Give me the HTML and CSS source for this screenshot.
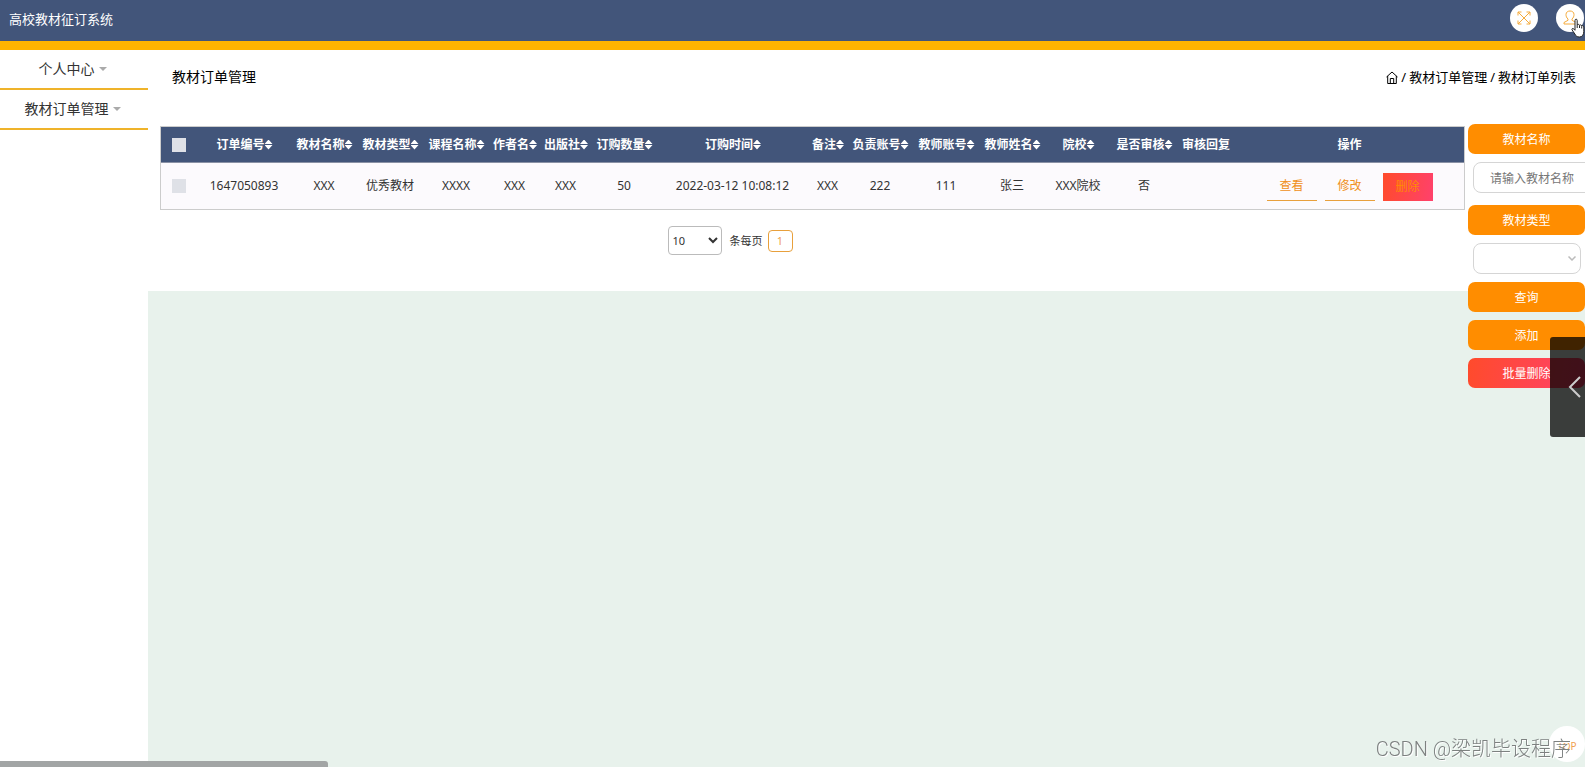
FILE: index.html
```html
<!DOCTYPE html>
<html lang="zh-CN">
<head>
<meta charset="utf-8">
<title>高校教材征订系统</title>
<link rel="stylesheet" href="styles.css">
</head>
<body>
<header class="topbar">
  <h1 class="brand">高校教材征订系统</h1>
  <div class="tools">
    <button class="round" aria-label="全屏"><svg width="14" height="14" viewBox="0 0 14 14"><path d="M1 4.500V1h3.500M9.500 1H13v3.500M13 9.500V13H9.500M4.500 13H1V9.500M1 1l12 12M13 1L1 13"/></svg></button>
    <button class="round" aria-label="用户"><svg width="14" height="16" viewBox="0 0 14 16"><path d="M5 9C3.500 7.800 3 6 3 4.500 3 2 5 1 7 1s4 1 4 3.500C11 6 10.500 7.800 9 9v1.300l4 2.200V14H1v-1.500l4-2.200z"/></svg></button>
  </div>
  <svg class="pointer" width="14" height="20" viewBox="0 0 14 20"><path d="M4 12V2.500C4 .7 6.200.7 6.200 2.500V7c.4-1 2.200-.8 2.300.4.500-.9 2.100-.6 2.200.6.600-.7 2.100-.3 2.100 1v4.500c0 3-1.500 5.500-4.500 5.500-2.300 0-3.500-1.200-4.300-2.800L1 11.800C.5 10.600 2 9.900 2.700 10.800L4 12.500M6.200 7v3M8.500 7.500V10M10.700 8.300V10.500"/></svg>
</header>
<div class="shell">
  <nav class="side">
    <a href="#">个人中心<span class="caret"></span></a>
    <a href="#">教材订单管理<span class="caret"></span></a>
  </nav>
  <main class="main">
    <div class="panel">
      <div class="heading">
        <h2>教材订单管理</h2>
        <nav class="crumbs">
          <a href="#" aria-label="首页"><svg width="12" height="13" viewBox="0 0 12 13"><path d="M.5 6L6 1l5.500 5M1.700 5v7.500h8.600V5M4.300 12V7.500h3.400V12"/></svg></a>
          <span>/</span><a href="#">教材订单管理</a><span>/</span><span>教材订单列表</span>
        </nav>
      </div>
      <div class="content">
        <section class="list">
          <table>
            <colgroup><col class="w36"><col class="w94"><col class="w66"><col class="w66"><col class="w66"><col class="w51"><col class="w51"><col class="w66"><col class="w151"><col class="w39"><col class="w66"><col class="w66"><col class="w66"><col class="w66"><col class="w66"><col class="w58"><col class="w229"></colgroup>
            <thead><tr>
              <th><input type="checkbox" aria-label="全选"></th>
              <th>订单编号<i></i></th><th>教材名称<i></i></th><th>教材类型<i></i></th><th>课程名称<i></i></th><th>作者名<i></i></th><th>出版社<i></i></th><th>订购数量<i></i></th><th>订购时间<i></i></th><th>备注<i></i></th><th>负责账号<i></i></th><th>教师账号<i></i></th><th>教师姓名<i></i></th><th>院校<i></i></th><th>是否审核<i></i></th><th>审核回复</th><th>操作</th>
            </tr></thead>
            <tbody><tr>
              <td><input type="checkbox" aria-label="选择订单"></td>
              <td>1647050893</td><td>XXX</td><td>优秀教材</td><td>XXXX</td><td>XXX</td><td>XXX</td><td>50</td><td>2022-03-12 10:08:12</td><td>XXX</td><td>222</td><td>111</td><td>张三</td><td>XXX院校</td><td>否</td><td></td>
              <td><div class="actions"><button>查看</button><button>修改</button><button class="danger">删除</button></div></td>
            </tr></tbody>
          </table>
          <div class="pager">
            <select id="size" class="size"><option>10</option></select>
            <label for="size">条每页</label>
            <button class="page">1</button>
          </div>
        </section>
        <form class="filters">
          <label class="pill" for="name">教材名称</label>
          <input class="field name" id="name" type="text" placeholder="请输入教材名称">
          <label class="pill" for="type">教材类型</label>
          <select class="field type" id="type"><option></option></select>
          <button class="pill" type="button">查询</button>
          <button class="pill" type="button">添加</button>
          <button class="pill remove" type="button">批量删除</button>
        </form>
      </div>
    </div>
  </main>
</div>
<button class="drawer" aria-label="展开"><svg width="14" height="22" viewBox="0 0 14 22"><path d="M12 1L2 11l10 10"/></svg></button>
<button class="to-top">TOP</button>
<div class="watermark">CSDN @梁凯毕设程序</div>
<div class="status"></div>
</body>
</html>
```
FILE: styles.css
```css
* { box-sizing: border-box; }
body {
  margin: 0;
  min-height: 100vh;
  display: flex;
  flex-direction: column;
  overflow: hidden;
  background: #e8f2ec;
  color: #333;
  font: 12px/18px "Noto Sans", "Noto Sans CJK SC", sans-serif;
}
h1, h2 { margin: 0; font-weight: 400; }
a { color: inherit; text-decoration: none; }
button, input, select { font: inherit; margin: 0; }
button { border: 0; padding: 0; }
svg { fill: none; stroke: currentColor; }

.topbar {
  position: relative;
  height: 50px;
  display: flex;
  justify-content: space-between;
  padding: 4px 1px 0 9px;
  background: #42557a;
  border-bottom: 9px solid #ffb400;
}
.brand { color: #fff; font-size: 13px; line-height: 30px; }
.tools { display: flex; gap: 18px; }
.round {
  width: 28px;
  height: 28px;
  display: grid;
  place-items: center;
  border-radius: 50%;
  background: #fff;
  color: #f5ab3c;
}
.pointer { position: absolute; right: 0; top: 18px; fill: #fff; stroke: #222; }

.shell { flex: 1; display: flex; }
.side { width: 148px; flex: none; background: #fff; }
.side a {
  display: flex;
  justify-content: center;
  align-items: center;
  gap: 4px;
  height: 40px;
  padding-right: 3px;
  font-size: 14px;
  border-bottom: 2px solid #efb32a;
}
.caret { border: 4px solid transparent; border-top-color: #aaa; border-bottom: 0; }
.main { flex: 1; min-width: 0; }
.panel { background: #fff; padding-bottom: 36px; }
.heading {
  display: flex;
  justify-content: space-between;
  align-items: center;
  height: 74px;
  padding: 0 9px 20px 24px;
  color: #000;
}
.heading h2 { font-size: 14px; }
.crumbs { display: flex; align-items: center; gap: 3px; font-size: 13px; }
.crumbs svg { display: block; }
.content { display: flex; align-items: flex-start; gap: 4px; height: 131px; padding-left: 12px; }
.list { flex: 1; min-width: 0; padding-top: 2px; }

table {
  width: 100%;
  table-layout: fixed;
  border-collapse: separate;
  border-spacing: 0;
  border: 1px solid #ccc;
}
.w36 { width: 36px; }
.w39 { width: 39px; }
.w51 { width: 51px; }
.w58 { width: 58px; }
.w66 { width: 66px; }
.w94 { width: 94px; }
.w151 { width: 151px; }
.w229 { width: 229px; }
th, td { padding: 0; text-align: center; vertical-align: middle; white-space: nowrap; }
th { height: 36px; background: #42557a; color: #fff; font-weight: 700; border-bottom: 1px solid #8a91a5; }
td { height: 46px; background: #fcfafd; }
th i {
  display: inline-block;
  width: 8px;
  height: 10px;
  margin-right: -1px;
  vertical-align: -1px;
  background: #fff;
  clip-path: polygon(50% 0, 100% 44%, 0 44%, 0 56%, 100% 56%, 50% 100%, 0 56%, 0 44%);
}
table input {
  display: block;
  margin: 0 auto;
  width: 14px;
  height: 14px;
  appearance: none;
  background: #dfe1e7;
}
.actions { display: flex; justify-content: center; gap: 8px; padding-top: 1px; }
.actions button { width: 50px; height: 28px; background: none; color: #f09020; border-bottom: 1px solid #e8a03c; }
.actions .danger { background: linear-gradient(100deg, #ff4b2b, #ff416c); color: #ff8c00; border: 0; }

.pager { display: flex; justify-content: center; align-items: center; margin: 16px 164px 0 0; font-size: 11px; }
.size { width: 54px; height: 29px; padding: 0; border: 1px solid #bbb; border-radius: 4px; background: #fff; color: #333; }
.pager label { margin: 0 5px 0 8px; }
.page { width: 25px; height: 22px; border: 1px solid #e8a03c; border-radius: 4px; background: #fff; color: #f0a050; }

.filters { width: 117px; flex: none; display: flex; flex-direction: column; }
.pill {
  display: block;
  flex: none;
  height: 30px;
  margin-bottom: 8px;
  padding-top: 1px;
  border-radius: 7px;
  background: #ff8d00;
  color: #fff;
  text-align: center;
  line-height: 30px;
}
.remove { background: linear-gradient(100deg, #ff4b2b, #ff416c); margin: 0; }
.field { height: 31px; margin: 0 4px 12px 5px; border: 1px solid #d5d5d5; border-radius: 8px; background: #fff; color: #666; }
.name { width: 120px; padding: 2px 16px 0; }
.name::placeholder { color: #777; }
.type {
  appearance: none;
  margin-bottom: 8px;
  background: #fff url("data:image/svg+xml,%3Csvg xmlns='http://www.w3.org/2000/svg' width='8' height='5' fill='none' stroke='%23bbb' stroke-width='1.500'%3E%3Cpath d='M.5.5L4 4 7.500.5'/%3E%3C/svg%3E") no-repeat right 4px center;
}

.drawer {
  position: fixed;
  right: 0;
  top: 337px;
  width: 35px;
  height: 100px;
  padding-right: 3px;
  display: flex;
  align-items: center;
  justify-content: flex-end;
  border-radius: 3px 0 0 3px;
  background: rgba(0, 0, 0, .75);
  color: #ccc;
}
.drawer svg { stroke-width: 2; }
.to-top {
  position: fixed;
  right: 0;
  bottom: 5px;
  width: 36px;
  height: 36px;
  padding-top: 3px;
  border-radius: 50%;
  background: #fff;
  color: #f0a050;
  font-size: 10px;
}
.watermark {
  position: fixed;
  right: 14px;
  bottom: 5px;
  color: #7d8180;
  font: 300 20px/26px Roboto, "Noto Sans CJK SC", sans-serif;
  text-shadow: 1px 1px 0 #fff;
}
.status {
  position: fixed;
  left: 0;
  bottom: 0;
  width: 328px;
  height: 6px;
  border-radius: 0 3px 0 0;
  background: #a2a5a5;
}
```
